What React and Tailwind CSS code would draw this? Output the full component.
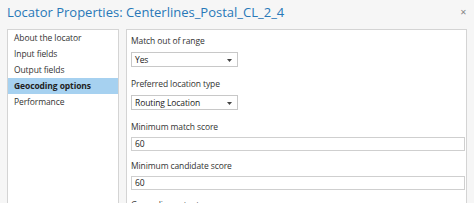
import React from "react";

const font = { fontFamily: '"Open Sans", "Noto Sans", sans-serif' };

function Arrow() {
  return (
    <svg width="5" height="3" viewBox="0 0 5 3" className="absolute right-[5px] top-[6px]">
      <path d="M0 0 L5 0 L2.5 3 Z" fill="#444" />
    </svg>
  );
}

function Select({ value }) {
  return (
    <div className="relative w-[107px] h-[15px] border border-[#c8c8c8] bg-white text-[8.5px] tracking-[-0.1px] leading-[13px] pl-[3px] text-[#222]">
      {value}
      <Arrow />
    </div>
  );
}

function Input({ value }) {
  return (
    <div className="w-[334px] h-[14px] border border-[#cfcfcf] bg-white text-[8.5px] tracking-[-0.1px] leading-[12px] pl-[3px] text-[#222]">
      {value}
    </div>
  );
}

function Label({ children, className = "" }) {
  return (
    <div className={"h-[14px] text-[8.5px] tracking-[-0.1px] leading-[14px] text-[#333] " + className}>{children}</div>
  );
}

export default function App() {
  const items = ["About the locator", "Input fields", "Output fields", "Geocoding options", "Performance"];
  return (
    <div className="w-[474px] h-[203px] bg-[#f6f6f6] overflow-hidden" style={font}>
      <div className="h-[24px] flex items-center justify-between pl-[7px] pr-[7px]">
        <div className="text-[13px] leading-[24px] text-[#2878b8]">Locator Properties: Centerlines_Postal_CL_2_4</div>
        <div className="text-[8px] text-[#888] leading-[24px]">✕</div>
      </div>
      <div className="flex mt-[5px] pl-[7px] gap-[7px]">
        <div className="w-[112px] h-[200px] border border-[#d4d4d4] bg-white">
          {items.map((it) => (
            <div
              key={it}
              className={
                "h-[16px] leading-[16px] text-[8.5px] tracking-[-0.1px] pl-[6px] " +
                (it === "Geocoding options" ? "bg-[#a6d1f0] font-bold text-[#222]" : "text-[#333]")
              }
            >
              {it}
            </div>
          ))}
        </div>
        <div className="w-[341px] h-[200px] border border-[#d4d4d4] bg-white pl-[4px] pt-[4px]">
          <Label>Match out of range</Label>
          <div className="mt-[4px]"><Select value="Yes" /></div>
          <Label className="mt-[10px]">Preferred location type</Label>
          <div className="mt-[4px]"><Select value="Routing Location" /></div>
          <Label className="mt-[10px]">Minimum match score</Label>
          <div className="mt-[3px]"><Input value="60" /></div>
          <Label className="mt-[8px]">Minimum candidate score</Label>
          <div className="mt-[3px]"><Input value="60" /></div>
          <Label className="mt-[8px]">Geocoding extent</Label>
        </div>
      </div>
    </div>
  );
}
